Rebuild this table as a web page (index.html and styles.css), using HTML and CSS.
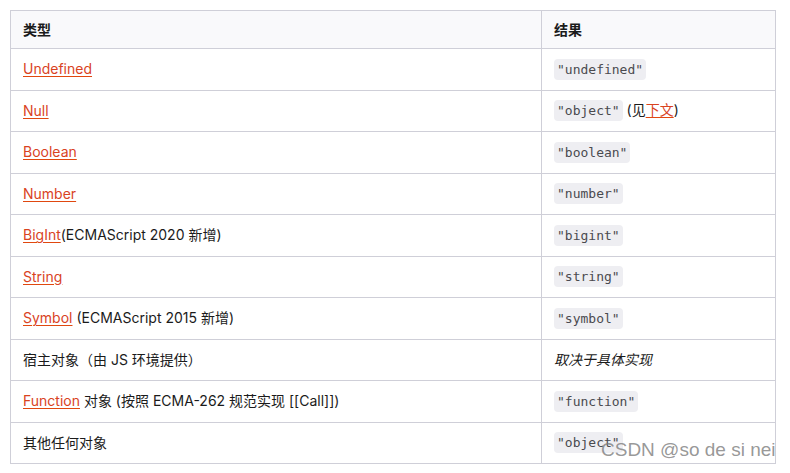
FILE: index.html
```html
<!DOCTYPE html>
<html lang="zh">
<head>
<meta charset="utf-8">
<link rel="stylesheet" href="styles.css">
</head>
<body>
<div class="page">
  <table class="types">
    <thead>
      <tr><th class="c1">类型</th><th>结果</th></tr>
    </thead>
    <tbody>
      <tr><td><a href="#">Undefined</a></td><td><code>"undefined"</code></td></tr>
      <tr><td><a href="#">Null</a></td><td><code>"object"</code> (见<a href="#">下文</a>)</td></tr>
      <tr><td><a href="#">Boolean</a></td><td><code>"boolean"</code></td></tr>
      <tr><td><a href="#">Number</a></td><td><code>"number"</code></td></tr>
      <tr><td><a href="#">BigInt</a>(ECMAScript 2020 新增)</td><td><code>"bigint"</code></td></tr>
      <tr><td><a href="#">String</a></td><td><code>"string"</code></td></tr>
      <tr><td><a href="#">Symbol</a> (ECMAScript 2015 新增)</td><td><code>"symbol"</code></td></tr>
      <tr><td>宿主对象（由 JS 环境提供）</td><td><em>取决于具体实现</em></td></tr>
      <tr><td><a href="#">Function</a> 对象 (按照 ECMA-262 规范实现 [[Call]])</td><td><code>"function"</code></td></tr>
      <tr><td>其他任何对象</td><td><code>"object"</code></td></tr>
    </tbody>
  </table>
  <div class="watermark">CSDN @so de si nei</div>
</div>
</body>
</html>
```
FILE: styles.css
```css
html, body {
  margin: 0;
  padding: 0;
  background: #ffffff;
}
.page {
  position: relative;
  padding: 10px 14px 10px 10px;
  font-family: Inter, "Noto Sans CJK SC", sans-serif;
  font-size: 14px;
  color: #1b1b1b;
}
.types {
  width: 766px;
  border-collapse: collapse;
  table-layout: fixed;
}
.types th,
.types td {
  border: 1px solid #cfcfd8;
  padding: 0 12px;
  text-align: left;
  vertical-align: middle;
  line-height: 20px;
}
.types th {
  background: #f9f9fb;
  font-weight: 600;
  height: 37px;
}
.types th.c1 {
  width: 506px;
}
.types tbody tr {
  height: 41.5px;
}
.types a {
  color: #d9431f;
  text-decoration: underline;
  text-decoration-color: #e0480f;
  text-underline-offset: 2px;
}
.types code {
  font-family: "DejaVu Sans Mono", "Liberation Mono", monospace;
  font-size: 13px;
  color: #4a4a4f;
  background: #eeeef2;
  border-radius: 4px;
  padding: 3px 3px;
}
.types em {
  font-style: italic;
}
.watermark {
  position: absolute;
  left: 601px;
  top: 439px;
  font-family: "Liberation Sans", Arial, sans-serif;
  font-size: 19px;
  line-height: 22px;
  color: rgba(125, 125, 125, 0.8);
  white-space: nowrap;
}
```
